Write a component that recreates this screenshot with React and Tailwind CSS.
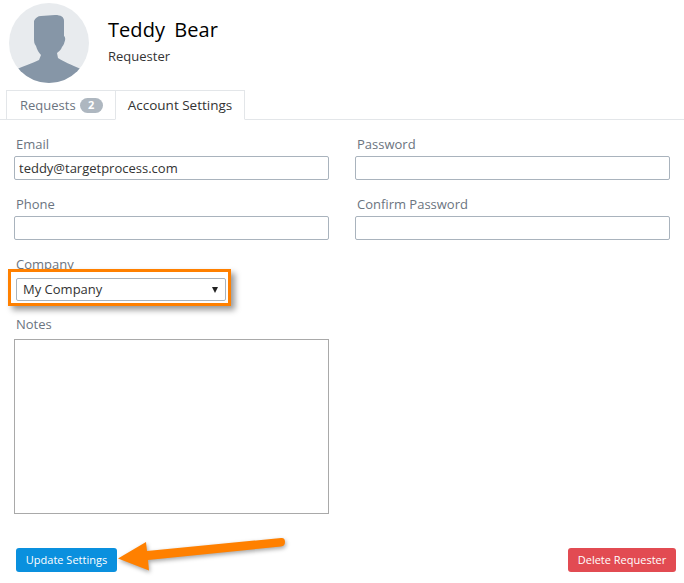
const font = { fontFamily: '"Open Sans", sans-serif' };

function Field({ label, children, cls = "" }) {
  return (
    <div className={cls}>
      <div className="pl-[2px] text-[13px] leading-[18px] text-[#6b7480] h-[20px]">{label}</div>
      {children}
    </div>
  );
}

function Input({ value = "" }) {
  return (
    <input
      readOnly
      value={value}
      className="block mt-[1px] w-full h-[24px] rounded-[2px] border border-[#a9b3bd] bg-white px-[4px] text-[13px] text-[#333] outline-none"
    />
  );
}

export default function App() {
  return (
    <div className="relative w-[684px] h-[583px] overflow-hidden bg-white" style={font}>
      {/* Header */}
      <div className="flex pl-[9px] pt-[3px] h-[90px]">
        <svg width="80" height="80" viewBox="0 0 80 80" className="shrink-0">
          <defs>
            <clipPath id="c"><circle cx="40" cy="40" r="40" /></clipPath>
          </defs>
          <circle cx="40" cy="40" r="40" fill="#e8ebee" />
          <g clipPath="url(#c)" fill="#8696a7">
            <path d="M25 18 C26 15 29 13 32 13 L46 12 C52 12 55 14 55 18 L55 33 C56.5 34 56.5 37 55.5 39 C55 41 54 43 53 44 C52 47 50 48 48 50 L49 55 C54 58 62 62 72 66 L72 84 L8 84 L8 66 C15 63 24 60 30 57 L32 52 C30 50 28 47 27 43 C25 41 25 38 25 35 Z" />
          </g>
        </svg>
        <div className="ml-[19px]">
          <div className="mt-[12px] text-[20px] leading-[30px] font-medium text-black [word-spacing:4px] tracking-[0.05px]">Teddy Bear</div>
          <div className="mt-[2px] text-[13px] leading-[18px] text-[#333]">Requester</div>
        </div>
      </div>

      {/* Tabs */}
      <div className="flex h-[30px] pl-[6px] border-b border-[#e3e6e9]">
        <div className="flex items-center w-[109px] h-[30px] pl-[13px] pt-[1px] border border-[#e3e6e9] border-r-0 text-[13px] text-[#6b7480]">
          Requests
          <span className="ml-[4px] flex items-center justify-center w-[23px] h-[15px] rounded-full bg-[#aeb7c0] text-[11px] font-bold text-white">2</span>
        </div>
        <div className="flex items-center justify-center w-[130px] h-[30px] pt-[1px] border border-[#e3e6e9] border-b-white bg-white text-[13.5px] font-medium text-[#333]">
          Account Settings
        </div>
      </div>

      {/* Form */}
      <div className="grid grid-cols-[315px_315px] gap-x-[26px] pl-[14px] pt-[15px]">
        <div>
          <Field label="Email"><Input value="teddy@targetprocess.com" /></Field>
          <Field label="Phone" cls="mt-[15px]"><Input /></Field>
          <Field label="Company" cls="mt-[15px]">
            <div className="relative ml-[2px] mt-[3px] flex h-[23px] w-[210px] items-center justify-between rounded-[2px] border border-[#a9b3bd] bg-white pl-[6px] pr-[7px] text-[13px] text-[#333]">
              <span className="pt-[1px]">My Company</span>
              <svg width="6" height="6" viewBox="0 0 6 6"><path d="M0 0H6L3 6Z" fill="#222" /></svg>
            </div>
          </Field>
          <Field label="Notes" cls="mt-[14px]">
            <div className="mt-[4px] h-[175px] w-full border border-[#a9a9a9] bg-white" />
          </Field>
        </div>
        <div>
          <Field label="Password"><Input /></Field>
          <Field label="Confirm Password" cls="mt-[15px]"><Input /></Field>
        </div>
      </div>

      {/* Footer buttons */}
      <div className="flex justify-between pl-[16px] pr-[8px] pt-[34px]">
        <div className="flex h-[24px] w-[101px] items-center justify-center rounded-[3px] bg-[#0a90de] text-[11px] font-medium text-white">Update Settings</div>
        <div className="flex h-[24px] w-[108px] items-center justify-center rounded-[3px] bg-[#e24b52] text-[11px] font-medium text-white">Delete Requester</div>
      </div>

      {/* Highlight overlay */}
      <div className="absolute left-[8px] top-[269px] h-[37px] w-[223px] border-[3px] border-[#ff8000] shadow-[4px_4px_6px_rgba(0,0,0,0.4)]" />

      {/* Arrow overlay */}
      <svg width="190" height="60" viewBox="0 0 190 60" className="absolute left-[110px] top-[530px]" style={{ filter: "drop-shadow(1px 2px 2px rgba(0,0,0,0.35))" }}>
        <path d="M8 28.5 L36 12 L37 21 L171 8 Q175 7.5 175 12 Q175 16 171 16.5 L38 30 L39 40.5 Z" fill="#ff8000" />
      </svg>
    </div>
  );
}
